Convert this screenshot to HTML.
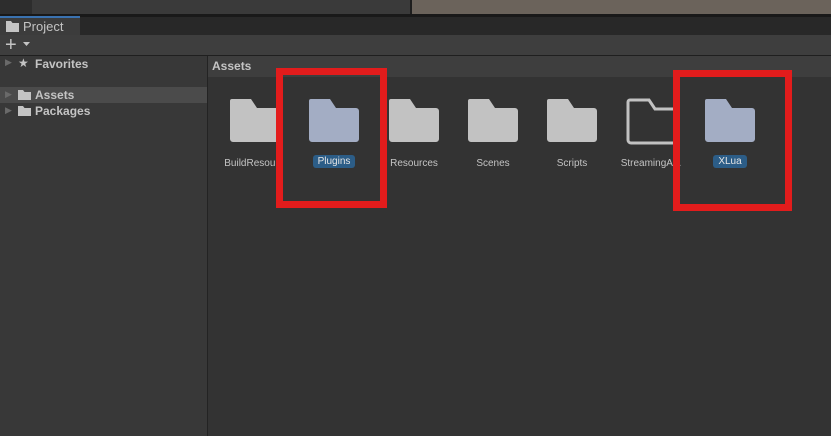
<!DOCTYPE html><html><head><style>
body{margin:0;width:831px;height:436px;background:#333;position:relative;overflow:hidden;font-family:"Liberation Sans",sans-serif}
div{position:absolute;box-sizing:border-box}
.t{color:#c4c4c4;font-size:10px;text-align:center;width:80px;white-space:nowrap}
.sel{background:#2c5d87;color:#e6e6e6;border-radius:3px;padding:1px 5px}
.box{border:7px solid #e21c1c}
</style></head><body>
<div style="left:0;top:0;width:32px;height:14px;background:#2d2d2d"></div>
<div style="left:32px;top:0;width:378px;height:14px;background:#3a3a3a"></div>
<div style="left:410px;top:0;width:2px;height:14px;background:#1e1e1e"></div>
<div style="left:412px;top:0;width:419px;height:14px;background:#6b635b"></div>
<div style="left:0;top:14px;width:831px;height:3px;background:#191919"></div>
<div style="left:0;top:17px;width:831px;height:18px;background:#282828"></div>
<div style="left:0;top:16px;width:80px;height:19px;background:#3c3c3c;border-top:2px solid #3a72b0"></div>
<svg style="position:absolute;left:6px;top:21px" width="14" height="11"><path d="M0 0h5l1.5 2H13v9H0z" fill="#c4c4c4"/></svg>
<div style="left:23px;top:19px;color:#c4c4c4;font-size:13px">Project</div>
<div style="left:0;top:35px;width:831px;height:20px;background:#3e3e3e"></div>
<div style="left:5px;top:35px;color:#c4c4c4;font-size:20px;line-height:20px">+</div>
<svg style="position:absolute;left:23px;top:42px" width="8" height="5"><path d="M0 0h7L3.5 4z" fill="#c4c4c4"/></svg>
<div style="left:0;top:55px;width:831px;height:1px;background:#1f1f1f"></div>
<div style="left:0;top:56px;width:207px;height:380px;background:#383838"></div>
<div style="left:207px;top:56px;width:1px;height:380px;background:#232323"></div>
<div style="left:0;top:87px;width:207px;height:16px;background:#4b4b4b"></div>
<div style="left:5px;top:57px;color:#6a6a6a;font-size:9px">▶</div>
<div style="left:18px;top:56px;color:#c4c4c4;font-size:12px">★</div>
<div style="left:35px;top:57px;color:#c4c4c4;font-size:12px;font-weight:bold">Favorites</div>
<div style="left:5px;top:89px;color:#6a6a6a;font-size:9px">▶</div>
<svg style="position:absolute;left:18px;top:90px" width="13" height="10"><path d="M0 0h5l1.5 2H13v8H0z" fill="#c4c4c4"/></svg>
<div style="left:35px;top:88px;color:#c4c4c4;font-size:12px;font-weight:bold">Assets</div>
<div style="left:5px;top:105px;color:#6a6a6a;font-size:9px">▶</div>
<svg style="position:absolute;left:18px;top:106px" width="13" height="10"><path d="M0 0h5l1.5 2H13v8H0z" fill="#c4c4c4"/></svg>
<div style="left:35px;top:104px;color:#c4c4c4;font-size:12px;font-weight:bold">Packages</div>
<div style="left:208px;top:56px;width:623px;height:21px;background:#3e3e3e"></div>
<div style="left:212px;top:59px;color:#c4c4c4;font-size:12px;font-weight:bold">Assets</div>

<svg style="position:absolute;left:0;top:0" width="831" height="436">
<defs>
<path id="f" d="M2 0h19l6 9h20a3 3 0 0 1 3 3v28a3 3 0 0 1-3 3H3a3 3 0 0 1-3-3V2a2 2 0 0 1 2-2z"/>
</defs>
<use href="#f" x="230" y="99" fill="#c2c2c2"/>
<use href="#f" x="309" y="99" fill="#a3adc4"/>
<use href="#f" x="389" y="99" fill="#c2c2c2"/>
<use href="#f" x="468" y="99" fill="#c2c2c2"/>
<use href="#f" x="547" y="99" fill="#c2c2c2"/>
<use href="#f" x="628" y="100" fill="none" stroke="#c2c2c2" stroke-width="3"/>
<use href="#f" x="705" y="99" fill="#a3adc4"/>
</svg>
<div class="t" style="left:214px;top:158px">BuildResou...</div>
<div class="t" style="left:294px;top:156px"><span class="sel">Plugins</span></div>
<div class="t" style="left:374px;top:158px">Resources</div>
<div class="t" style="left:453px;top:158px">Scenes</div>
<div class="t" style="left:532px;top:158px">Scripts</div>
<div class="t" style="left:611px;top:158px">StreamingA...</div>
<div class="t" style="left:690px;top:156px"><span class="sel">XLua</span></div>
<div class="box" style="left:276px;top:68px;width:111px;height:140px"></div>
<div class="box" style="left:673px;top:70px;width:119px;height:141px"></div>
</body></html>
